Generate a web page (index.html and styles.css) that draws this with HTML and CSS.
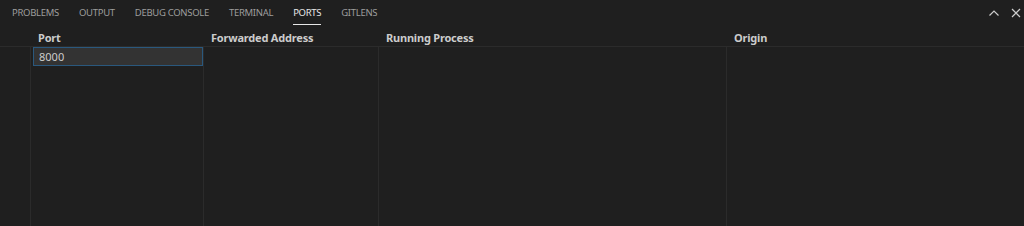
FILE: index.html
```html
<!DOCTYPE html>
<html>
<head>
<meta charset="utf-8">
<link rel="stylesheet" href="styles.css">
</head>
<body>
<div class="panel">
  <div class="tabbar">
    <div class="tabs">
      <div class="tab">PROBLEMS</div>
      <div class="tab">OUTPUT</div>
      <div class="tab">DEBUG CONSOLE</div>
      <div class="tab">TERMINAL</div>
      <div class="tab active">PORTS</div>
      <div class="tab">GITLENS</div>
    </div>
    <div class="actions">
      <svg class="icon" width="16" height="16" viewBox="0 0 16 16"><path d="M3.5 10.5 L8 6 L12.5 10.5" fill="none" stroke="#cccccc" stroke-width="1.2"/></svg>
      <svg class="icon" width="16" height="16" viewBox="0 0 16 16"><path d="M4 4 L12 12 M12 4 L4 12" fill="none" stroke="#cccccc" stroke-width="1.2"/></svg>
    </div>
  </div>
  <div class="table">
    <div class="hdr c0"></div>
    <div class="hdr c1">Port</div>
    <div class="hdr c2">Forwarded Address</div>
    <div class="hdr c3">Running Process</div>
    <div class="hdr c4">Origin</div>
    <div class="cell c0"></div>
    <div class="cell c1"><div class="input">8000</div></div>
    <div class="cell c2"></div>
    <div class="cell c3"></div>
    <div class="cell c4"></div>
  </div>
</div>
</body>
</html>
```
FILE: styles.css
```css
html, body {
  margin: 0;
  padding: 0;
  background: #1f1f1f;
  height: 226px;
  overflow: hidden;
}
.panel {
  font-family: "Noto Sans", "Open Sans", sans-serif;
  color: #cccccc;
  height: 226px;
  display: flex;
  flex-direction: column;
}
.tabbar {
  height: 28px;
  display: flex;
  justify-content: space-between;
  align-items: flex-start;
}
.tabs {
  display: flex;
  padding-left: 12px;
  gap: 20px;
}
.tab {
  font-size: 9.5px;
  color: #9d9d9d;
  height: 25px;
  line-height: 26px;
  box-sizing: border-box;
  letter-spacing: -0.3px;
}
.tab.active {
  color: #e7e7e7;
  border-bottom: 1px solid #e7e7e7;
}
.actions {
  display: flex;
  gap: 6px;
  padding-top: 5px;
  padding-right: 0px;
}
.icon { display: block; }
.table {
  flex: 1;
  display: grid;
  grid-template-columns: 30px 173px 175px 348px 1fr;
  grid-template-rows: 19px 1fr;
}
.hdr {
  font-size: 11px;
  font-weight: bold;
  color: #cccccc;
  line-height: 19px;
  padding-left: 8px;
  border-bottom: 1px solid #2b2b2b;
  white-space: nowrap;
  letter-spacing: -0.2px;
}
.hdr.c0 { padding-left: 0; }
.cell {
  border-left: 1px solid #2b2b2b;
}
.cell.c0 { border-left: none; }
.cell.c1 { padding-left: 2px; }
.input {
  height: 19px;
  box-sizing: border-box;
  border: 1px solid #2a587d;
  background: #333333;
  font-size: 11px;
  line-height: 17px;
  padding-left: 5px;
  color: #cccccc;
}
```
